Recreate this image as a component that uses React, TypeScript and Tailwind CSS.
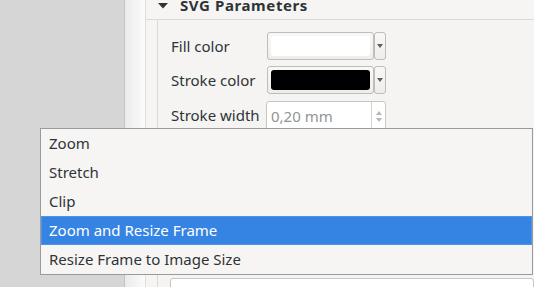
import React from "react";

function Caret() {
  return (
    <svg width="6" height="4" viewBox="0 0 6 4" className="block">
      <path d="M0 0 L6 0 L3 4 Z" fill="#5b5f60" />
    </svg>
  );
}

function ColorButton({ swatch }: { swatch: string }) {
  return (
    <div className="flex h-[28px]">
      <div className="w-[107px] h-full rounded-[3px] border border-[#c0bcb7] bg-gradient-to-b from-[#f9f8f7] to-[#eeedec] p-[3px]">
        <div className={`w-full h-full rounded-[3px] ${swatch}`} />
      </div>
      <div className="w-[12px] h-full rounded-[3px] border border-[#c0bcb7] bg-gradient-to-b from-[#f9f8f7] to-[#eeedec] flex items-center justify-center">
        <Caret />
      </div>
    </div>
  );
}

export default function App() {
  const items = ["Zoom", "Stretch", "Clip", "Zoom and Resize Frame", "Resize Frame to Image Size"];
  return (
    <div
      className="relative w-[534px] h-[287px] overflow-hidden flex bg-[#d6d6d6] text-[#2e3436]"
      style={{ fontFamily: '"Noto Sans", "Open Sans", sans-serif' }}
    >
      <div className="w-[124px] shrink-0 bg-[#d6d6d6]" />
      <div className="w-[22px] shrink-0 border-l border-l-[#c2c2c2] border-r border-r-[#dedede] bg-gradient-to-r from-[#ebebeb] to-[#fbfbfb]" />
      <div className="flex-1 bg-[#f6f5f4] flex flex-col overflow-hidden">
        <div className="h-[20px] shrink-0 border-b border-[#dbd9d6] flex items-start pl-[12px]">
          <svg width="10" height="6" viewBox="0 0 10 6" className="mt-[3px]">
            <path d="M0 0 L10 0 L5 5.5 Z" fill="#2e3436" />
          </svg>
          <span className="ml-[12px] mt-[-2px] text-[15px] leading-[15px] font-bold tracking-[0.6px]">SVG Parameters</span>
        </div>
        <div className="flex-1 ml-[11px] border-l border-[#dcdad7] bg-[#f5f4f3] flex flex-col pt-[12px] pl-[13px]">
          <div className="flex flex-col gap-[6px]">
            <div className="flex items-center h-[28px]">
              <span className="w-[96px] text-[15px]">Fill color</span>
              <ColorButton swatch="bg-white" />
            </div>
            <div className="flex items-center h-[28px]">
              <span className="w-[96px] text-[15px]">Stroke color</span>
              <ColorButton swatch="bg-black" />
            </div>
            <div className="flex items-center h-[28px] mt-[1px]">
              <span className="w-[95px] text-[15px]">Stroke width</span>
              <div className="w-[120px] h-[30px] self-start rounded-[3px] border border-[#c9c5c0] bg-white flex">
                <span className="flex-1 pl-[4px] text-[15px] leading-[28px] text-[#929595]">0,20 mm</span>
                <div className="w-[14px] border-l border-[#d8d4d0] flex flex-col items-center justify-center gap-[3px]">
                  <svg width="6" height="4" viewBox="0 0 6 4"><path d="M0 4 L6 4 L3 0 Z" fill="#b5b7b7" /></svg>
                  <svg width="6" height="4" viewBox="0 0 6 4"><path d="M0 0 L6 0 L3 4 Z" fill="#b5b7b7" /></svg>
                </div>
              </div>
            </div>
          </div>
          <div className="mt-auto mb-[-19px] ml-[-1px] h-[28px] rounded-t-[3px] border border-[#c9c5c0] bg-white pl-[6px] text-[15px] leading-[26px] text-[#555a5b]">
            Exact fit
          </div>
        </div>
      </div>
      <div className="absolute left-[40px] top-[128px] w-[493px] h-[147px] border border-[#9a9a9a] bg-[#f6f5f4] flex flex-col">
        {items.map((it, i) =>
          i === 3 ? (
            <div key={it} className="h-[29px] shrink-0 flex items-center pl-[7px] text-[15px] text-white bg-[#3584e4] border border-[#4d94ea]">
              {it}
            </div>
          ) : (
            <div key={it} className="h-[29px] shrink-0 flex items-center pl-[8px] text-[15px] text-[#2e3436]">
              {it}
            </div>
          )
        )}
      </div>
    </div>
  );
}
